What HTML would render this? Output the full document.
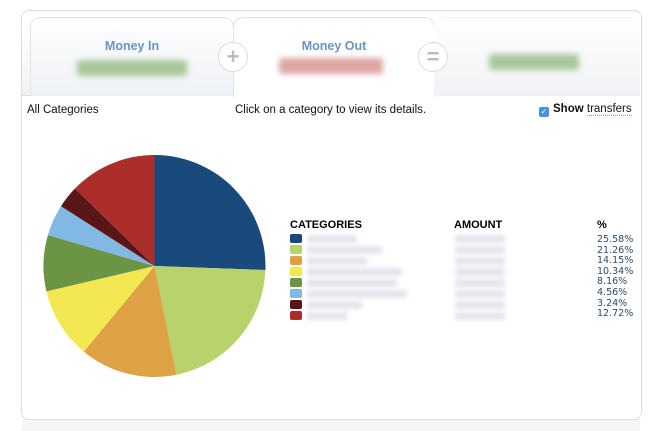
<!DOCTYPE html>
<html><head><style>
body{margin:0;width:670px;height:431px;background:#fff;font-family:"Liberation Sans",sans-serif;position:relative;overflow:hidden}
.abs{position:absolute}
.card{left:21px;top:10px;width:619px;height:408px;border:1px solid #ddd;border-radius:8px;background:#fff}
.shadow{left:22px;top:419px;width:618px;height:12px;background:#f6f6f6}
.tab{top:17px;height:78px;border:1px solid #e2e2e2;border-bottom:none;border-radius:10px 10px 0 0;background:linear-gradient(#fff,#eef1f6)}
.tt{font-weight:bold;font-size:12.5px;color:#6a93c6;text-align:center;width:100%;top:21px}
.blur{filter:blur(3px);height:16px;border-radius:3px}
.circ{width:28px;height:28px;border-radius:50%;background:#fff;border:1px solid #ddd;color:#bbb;font-size:22px;font-weight:bold;text-align:center;line-height:27px}
.row{font-size:11.5px;color:#111}
.pct{left:597px;font-size:9.5px;color:#2d4a6b;line-height:10.6px;font-family:"DejaVu Sans",sans-serif}
.sw{left:290px;width:12px;height:9px;border-radius:2px}
.nm{left:307px;height:8px;background:#e4e6ec;filter:blur(2px)}
.am{left:455px;width:50px;height:8px;background:#e4e6ec;filter:blur(2px)}
.hd{top:219px;font-weight:bold;font-size:11px}
</style></head><body>
<div class="abs shadow"></div>
<div class="abs card"></div>
<div class="abs" style="left:22px;top:30px;width:618px;height:65px;background:linear-gradient(#fff,#f0f2f5)"></div>
<div class="abs" style="left:22px;top:95px;width:618px;border-top:1px solid #ddd"></div>
<div class="abs tab" style="left:30px;width:202px"><div class="abs tt">Money In</div><div class="abs blur" style="left:46px;top:42px;width:110px;background:#a8c89c"></div></div>
<div class="abs tab" style="left:233px;width:200px;height:79px;background:#fff"><div class="abs tt">Money Out</div><div class="abs blur" style="left:45px;top:40px;width:104px;background:#e0a6a6"></div></div>
<div class="abs tab" style="left:434px;width:204px;border-color:transparent;background:linear-gradient(#fff,#f0f2f5)"><div class="abs blur" style="left:54px;top:36px;width:90px;background:#a8c89c"></div></div>
<div class="abs circ" style="left:218px;top:42px">+</div>
<div class="abs circ" style="left:418px;top:42px">=</div>
<div class="abs row" style="left:27px;top:104px">All Categories</div>
<div class="abs row" style="left:235px;top:104px">Click on a category to view its details.</div>
<div class="abs" style="left:539px;top:107px;width:10px;height:10px;border-radius:2px;background:#4a8fe0;color:#fff;font-size:8px;line-height:10px;text-align:center">✓</div>
<div class="abs row" style="left:553px;top:103px"><b>Show</b> <span style="border-bottom:1px dotted #6a9ad0">transfers</span></div>
<svg class="abs" style="left:0;top:0" width="670" height="431">
<path d="M154.5 266 L154.5 155 A111 111 0 0 1 265.4 270 Z" fill="#1a4a7c"/>
<path d="M154.5 266 L265.4 270 A111 111 0 0 1 176.4 374.8 Z" fill="#b8d36c"/>
<path d="M154.5 266 L176.4 374.8 A111 111 0 0 1 83.8 351.6 Z" fill="#dea244"/>
<path d="M154.5 266 L83.8 351.6 A111 111 0 0 1 46.4 291.4 Z" fill="#f3e851"/>
<path d="M154.5 266 L46.4 291.4 A111 111 0 0 1 47.9 235.1 Z" fill="#6b9444"/>
<path d="M154.5 266 L47.9 235.1 A111 111 0 0 1 61 206.2 Z" fill="#82b8e4"/>
<path d="M154.5 266 L61 206.2 A111 111 0 0 1 75 188.5 Z" fill="#5a1616"/>
<path d="M154.5 266 L75 188.5 A111 111 0 0 1 154.5 155 Z" fill="#ac2e2b"/>
</svg>
<div class="abs hd" style="left:290px">CATEGORIES</div>
<div class="abs hd" style="left:454px">AMOUNT</div>
<div class="abs hd" style="left:597px">%</div>
<div class="abs sw" style="top:234px;background:#1a4a7c"></div>
<div class="abs sw" style="top:245px;background:#b8d36c"></div>
<div class="abs sw" style="top:256px;background:#dea244"></div>
<div class="abs sw" style="top:267px;background:#f3e851"></div>
<div class="abs sw" style="top:278px;background:#6b9444"></div>
<div class="abs sw" style="top:289px;background:#82b8e4"></div>
<div class="abs sw" style="top:300px;background:#5a1616"></div>
<div class="abs sw" style="top:311px;background:#ac2e2b"></div>
<div class="abs nm" style="top:235px;width:50px"></div><div class="abs nm" style="top:246px;width:75px"></div><div class="abs nm" style="top:257px;width:60px"></div><div class="abs nm" style="top:268px;width:95px"></div><div class="abs nm" style="top:279px;width:90px"></div><div class="abs nm" style="top:290px;width:100px"></div><div class="abs nm" style="top:301px;width:55px"></div><div class="abs nm" style="top:312px;width:40px"></div>
<div class="abs am" style="top:235px"></div><div class="abs am" style="top:246px"></div><div class="abs am" style="top:257px"></div><div class="abs am" style="top:268px"></div><div class="abs am" style="top:279px"></div><div class="abs am" style="top:290px"></div><div class="abs am" style="top:301px"></div><div class="abs am" style="top:312px"></div>
<div class="abs pct" style="top:235px">25.58%<br>21.26%<br>14.15%<br>10.34%<br>8.16%<br>4.56%<br>3.24%<br>12.72%</div>
</body></html>
